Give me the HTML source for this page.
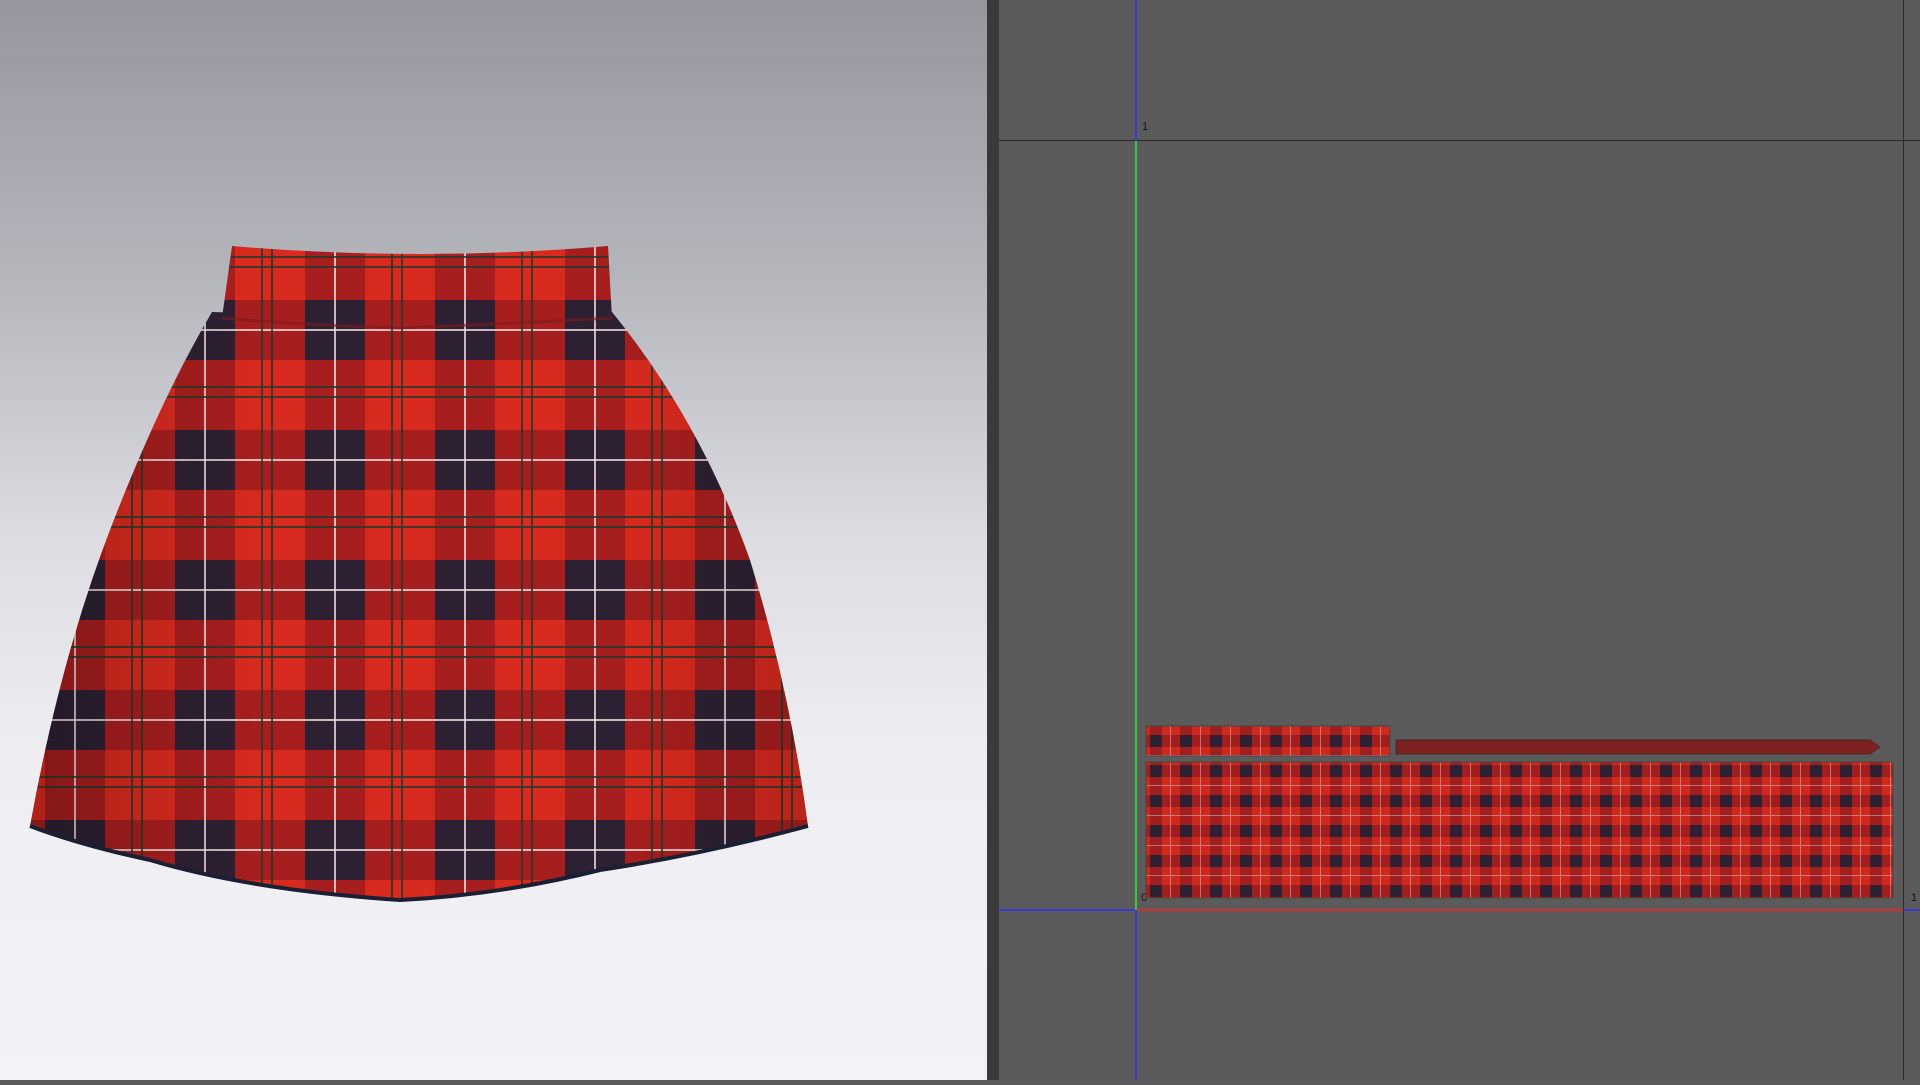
<!DOCTYPE html>
<html><head><style>
html,body{margin:0;padding:0;width:1920px;height:1080px;overflow:hidden;background:#5b5b5b;font-family:"Liberation Sans",sans-serif}
#left{position:absolute;left:0;top:0;width:987px;height:1080px;background:linear-gradient(#96969e 0%,#b4b4bb 25%,#dcdce2 50%,#eeeef2 70%,#f3f3f7 100%)}
#strip{position:absolute;left:987px;top:0;width:12px;height:1080px;background:#3a3a3a}
.l{position:absolute}
.t{position:absolute;font-size:11px;color:#111}
</style></head><body>
<div id="left">
<svg width="987" height="1080" viewBox="0 0 987 1080">
<defs>
<pattern id="p" width="130" height="130" patternUnits="userSpaceOnUse" x="45" y="40">
<rect width="130" height="130" fill="#d82a1e"/>
<rect x="0" y="0" width="60" height="130" fill="#6a1020" opacity=".45"/>
<rect x="0" y="0" width="130" height="60" fill="#6a1020" opacity=".45"/>
<rect x="0" y="0" width="60" height="60" fill="#1c2236" opacity=".85"/>
<rect x="29" y="0" width="2" height="130" fill="#f0e0e0" opacity=".8"/>
<rect x="0" y="29" width="130" height="2" fill="#f0e0e0" opacity=".8"/>
<rect x="86" y="0" width="2" height="130" fill="#1f3a2a" opacity=".8"/>
<rect x="96" y="0" width="2" height="130" fill="#1f3a2a" opacity=".8"/>
<rect x="0" y="86" width="130" height="2" fill="#1f3a2a" opacity=".8"/>
<rect x="0" y="96" width="130" height="2" fill="#1f3a2a" opacity=".8"/>
</pattern>
<linearGradient id="sh" x1="0" x2="1"><stop offset="0" stop-color="#000" stop-opacity=".2"/><stop offset=".3" stop-color="#000" stop-opacity="0"/><stop offset=".75" stop-color="#000" stop-opacity="0"/><stop offset="1" stop-color="#000" stop-opacity=".15"/></linearGradient>
</defs>
<path d="M212,312 Q400,318 612,312 Q700,420 750,560 Q790,690 808,826 Q700,855 600,870 Q500,895 400,900 Q250,890 150,860 Q80,845 30,826 Q60,660 110,530 Q160,400 212,312 Z" fill="url(#p)"/>
<path d="M212,312 Q400,318 612,312 Q700,420 750,560 Q790,690 808,826 Q700,855 600,870 Q500,895 400,900 Q250,890 150,860 Q80,845 30,826 Q60,660 110,530 Q160,400 212,312 Z" fill="url(#sh)"/>
<path d="M30,826 Q80,845 150,860 Q250,890 400,900 Q500,895 600,870 Q700,855 808,826" fill="none" stroke="#1a1f33" stroke-width="4"/>
<path d="M232,246 Q420,262 608,246 L612,318 Q500,324 400,328 Q300,325 222,318 Z" fill="url(#p)"/>
<path d="M222,318 Q300,325 400,328 Q500,324 612,318" fill="none" stroke="#7a1a1e" stroke-width="3" opacity=".6"/>
</svg>
</div>
<div id="strip"></div>
<div class="l" style="left:999px;top:140px;width:921px;height:1px;background:#2a2a2a"></div>
<div class="l" style="left:1135px;top:0;width:2px;height:141px;background:#3a3ad0"></div>
<div class="l" style="left:1135px;top:141px;width:2px;height:769px;background:#3cc83c"></div>
<div class="l" style="left:1135px;top:910px;width:2px;height:170px;background:#3a3ad0"></div>
<div class="l" style="left:999px;top:909px;width:136px;height:2px;background:#3a3ad0"></div>
<div class="l" style="left:1904px;top:909px;width:16px;height:2px;background:#3a3ad0"></div>
<div class="l" style="left:1137px;top:909px;width:767px;height:2px;background:#d03030"></div>
<div class="l" style="left:1903px;top:0;width:1px;height:1080px;background:#2e2e2e"></div>
<div class="t" style="left:1142px;top:121px">1</div>
<div class="t" style="left:1141px;top:892px">0</div>
<div class="t" style="left:1911px;top:892px">1</div>
<svg class="l" style="left:0;top:0" width="1920" height="1080">
<defs>
<pattern id="q" width="30" height="30" patternUnits="userSpaceOnUse" x="1150" y="765">
<rect width="30" height="30" fill="#cc2a1e"/>
<rect x="0" width="12" height="30" fill="#6a1020" opacity=".45"/>
<rect y="0" width="30" height="12" fill="#6a1020" opacity=".45"/>
<rect width="12" height="12" fill="#1c2236" opacity=".85"/>
<rect x="20" width="1" height="30" fill="#e0c0c0" opacity=".5"/>
<rect y="20" width="30" height="1" fill="#e0c0c0" opacity=".5"/>
</pattern>
</defs>
<rect x="1146" y="726" width="244" height="30" fill="url(#q)" stroke="#444" stroke-width="1"/>
<path d="M1396,740 L1870,740 L1880,747 L1870,754 L1396,754 Z" fill="#7d2220" stroke="#4a2a2a" stroke-width="1"/>
<rect x="1146" y="762" width="747" height="136" fill="url(#q)" stroke="#444" stroke-width="1"/>
</svg>
</body></html>
